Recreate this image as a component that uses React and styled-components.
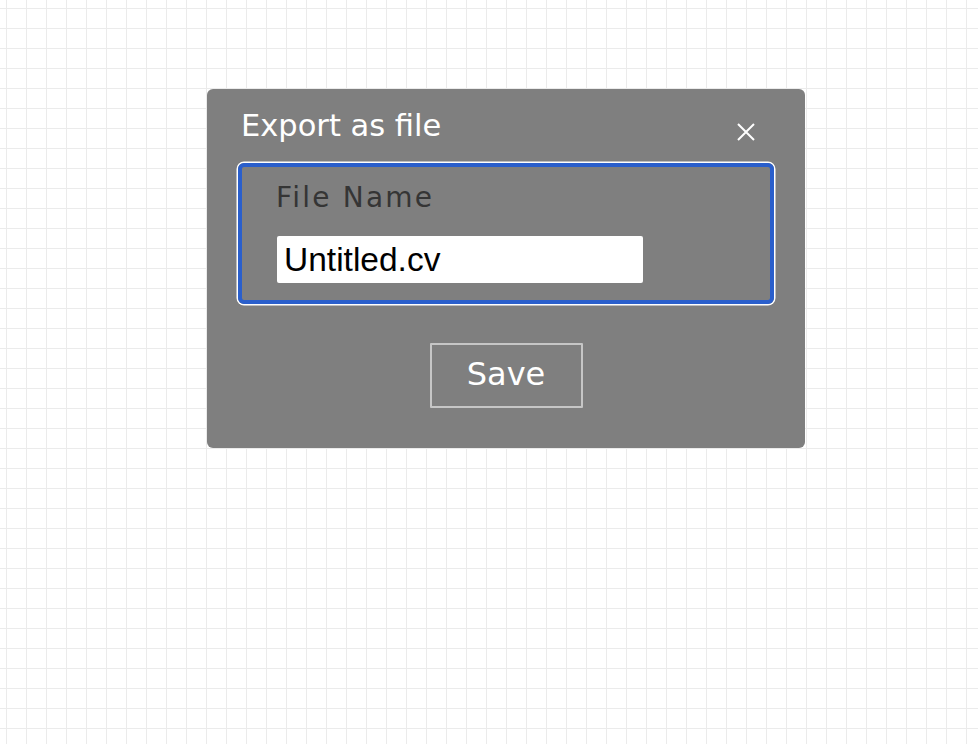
import React from "react";
import styled, { createGlobalStyle } from "styled-components";

const Global = createGlobalStyle`
  html, body { margin: 0; padding: 0; }
  body {
    width: 978px;
    height: 744px;
    overflow: hidden;
    background-color: #ffffff;
    background-image:
      linear-gradient(to right, #ebebeb 1px, transparent 1px),
      linear-gradient(to bottom, #ebebeb 1px, transparent 1px);
    background-size: 20px 20px;
    background-position: 6px 8px;
    font-family: "DejaVu Sans", sans-serif;
  }
`;

const Page = styled.div`
  padding: 89px 0 0 207px;
`;

const Dialog = styled.div`
  width: 598px;
  height: 359px;
  box-sizing: border-box;
  background: #7f7f7f;
  border-radius: 6px;
  padding: 0 30px 40px 30px;
  display: flex;
  flex-direction: column;
`;

const Header = styled.div`
  height: 74px;
  display: flex;
  align-items: flex-start;
  justify-content: space-between;
`;

const Title = styled.h1`
  margin: 19px 0 0 4px;
  font-family: "DejaVu Sans", sans-serif;
  font-weight: 400;
  font-size: 30.5px;
  line-height: 36px;
  color: #ffffff;
`;

const CloseButton = styled.button`
  margin: 34px 20px 0 0;
  padding: 0;
  width: 18px;
  height: 18px;
  border: none;
  background: transparent;
  display: flex;
  cursor: pointer;
`;

const Field = styled.fieldset`
  margin: 0 0 0 1px;
  width: 536px;
  height: 141px;
  box-sizing: border-box;
  border: 4px solid #2a5fcc;
  border-radius: 6px;
  box-shadow: 0 0 0 1.5px #ffffff;
  padding: 0 0 0 34px;
  display: flex;
  flex-direction: column;
  align-items: flex-start;
`;

const Label = styled.label`
  margin-top: 14px;
  font-family: "DejaVu Sans", sans-serif;
  font-size: 28px;
  line-height: 34px;
  letter-spacing: 2.2px;
  color: #353535;
`;

const Input = styled.input`
  margin: 21px 0 0 1px;
  width: 366px;
  height: 47px;
  box-sizing: border-box;
  border: none;
  border-radius: 2px;
  background: #ffffff;
  padding: 0 0 0 7px;
  font-family: "Liberation Sans", Arial, sans-serif;
  font-size: 33.5px;
  color: #000000;
  outline: none;
`;

const Footer = styled.div`
  flex: 1;
  display: flex;
  justify-content: center;
  align-items: flex-end;
`;

const SaveButton = styled.button`
  width: 153px;
  height: 65px;
  box-sizing: border-box;
  background: transparent;
  border: 2px solid #c6c6c6;
  border-radius: 1px;
  color: #ffffff;
  font-family: "DejaVu Sans", sans-serif;
  font-size: 32px;
  padding: 0 0 4px 0;
  cursor: pointer;
`;

export default function App() {
  return (
    <>
      <Global />
      <Page>
        <Dialog>
          <Header>
            <Title>Export as file</Title>
            <CloseButton aria-label="Close">
              <svg width="18" height="18" viewBox="0 0 18 18">
                <path d="M1 1 L17 17 M17 1 L1 17" stroke="#ffffff" strokeWidth="2" fill="none" />
              </svg>
            </CloseButton>
          </Header>
          <Field>
            <Label htmlFor="fname">File Name</Label>
            <Input id="fname" defaultValue="Untitled.cv" />
          </Field>
          <Footer>
            <SaveButton>Save</SaveButton>
          </Footer>
        </Dialog>
      </Page>
    </>
  );
}
